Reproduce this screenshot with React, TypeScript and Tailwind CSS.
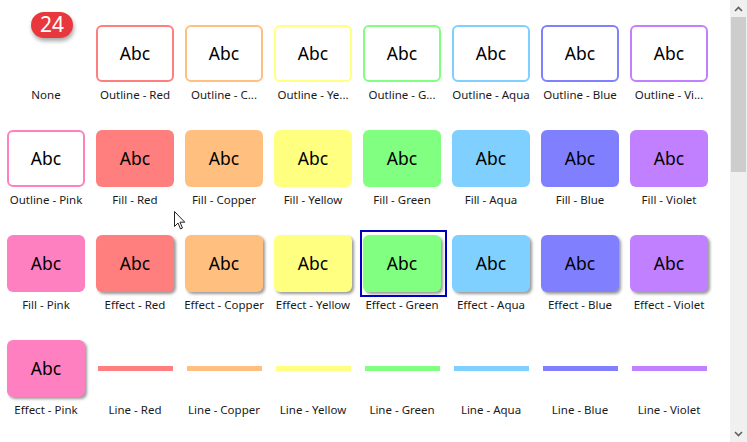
import React from "react";

type Item = {
  kind: "none" | "outline" | "fill" | "effect" | "line";
  color: string;
  label: string;
  selected?: boolean;
};

const C = {
  red: "#ff7f7f",
  copper: "#ffbf7f",
  yellow: "#ffff80",
  green: "#80ff80",
  aqua: "#80d0ff",
  blue: "#8080ff",
  violet: "#c080ff",
  pink: "#ff80c0",
};

const items: Item[] = [
  { kind: "none", color: "", label: "None" },
  { kind: "outline", color: C.red, label: "Outline - Red" },
  { kind: "outline", color: C.copper, label: "Outline - C..." },
  { kind: "outline", color: C.yellow, label: "Outline - Ye..." },
  { kind: "outline", color: C.green, label: "Outline - G..." },
  { kind: "outline", color: C.aqua, label: "Outline - Aqua" },
  { kind: "outline", color: C.blue, label: "Outline - Blue" },
  { kind: "outline", color: C.violet, label: "Outline - Vi..." },
  { kind: "outline", color: C.pink, label: "Outline - Pink" },
  { kind: "fill", color: C.red, label: "Fill - Red" },
  { kind: "fill", color: C.copper, label: "Fill - Copper" },
  { kind: "fill", color: C.yellow, label: "Fill - Yellow" },
  { kind: "fill", color: C.green, label: "Fill - Green" },
  { kind: "fill", color: C.aqua, label: "Fill - Aqua" },
  { kind: "fill", color: C.blue, label: "Fill - Blue" },
  { kind: "fill", color: C.violet, label: "Fill - Violet" },
  { kind: "fill", color: C.pink, label: "Fill - Pink" },
  { kind: "effect", color: C.red, label: "Effect - Red" },
  { kind: "effect", color: C.copper, label: "Effect - Copper" },
  { kind: "effect", color: C.yellow, label: "Effect - Yellow" },
  { kind: "effect", color: C.green, label: "Effect - Green", selected: true },
  { kind: "effect", color: C.aqua, label: "Effect - Aqua" },
  { kind: "effect", color: C.blue, label: "Effect - Blue" },
  { kind: "effect", color: C.violet, label: "Effect - Violet" },
  { kind: "effect", color: C.pink, label: "Effect - Pink" },
  { kind: "line", color: C.red, label: "Line - Red" },
  { kind: "line", color: C.copper, label: "Line - Copper" },
  { kind: "line", color: C.yellow, label: "Line - Yellow" },
  { kind: "line", color: C.green, label: "Line - Green" },
  { kind: "line", color: C.aqua, label: "Line - Aqua" },
  { kind: "line", color: C.blue, label: "Line - Blue" },
  { kind: "line", color: C.violet, label: "Line - Violet" },
];

function Tile({ item }: { item: Item }) {
  if (item.kind === "none") return <div className="h-[57px] w-[78px]" />;
  if (item.kind === "line")
    return (
      <div className="flex h-[57px] w-[78px] items-center justify-end pr-[1px]">
        <div className="h-[5px] w-[75px]" style={{ backgroundColor: item.color }} />
      </div>
    );
  const base =
    "flex h-[57px] w-[78px] items-center justify-center rounded-[6px] text-[17.5px] text-black";
  if (item.kind === "outline")
    return (
      <div className={base + " border-2 bg-white"} style={{ borderColor: item.color }}>
        Abc
      </div>
    );
  if (item.kind === "fill")
    return (
      <div className={base} style={{ backgroundColor: item.color }}>
        Abc
      </div>
    );
  return (
    <div
      className={base + " shadow-[2px_2px_3px_rgba(0,0,0,0.4)]"}
      style={{ backgroundColor: item.color }}
    >
      Abc
    </div>
  );
}

export default function App() {
  return (
    <div
      className="relative flex h-[442px] w-[747px] overflow-hidden bg-white"
      style={{ fontFamily: '"Noto Sans", "Open Sans", sans-serif' }}
    >
      <div className="relative w-[730px]">
        <div className="grid grid-cols-[repeat(8,78px)] gap-x-[11px] gap-y-[27px] pl-[7px] pt-[25px]">
          {items.map((it, i) => (
            <div key={i} className="relative flex flex-col items-center">
              {it.selected && (
                <div className="absolute left-[-3px] top-[-5px] h-[67px] w-[87px] border-2 border-[#0000c0]" />
              )}
              <Tile item={it} />
              <div className="mt-[5px] whitespace-nowrap text-[11.5px] leading-[16px] text-[#1a1a1a]">
                {it.label}
              </div>
            </div>
          ))}
        </div>

        {/* badge */}
        <div className="absolute left-[31px] top-[12px] flex h-[26px] w-[42px] items-center justify-center rounded-full bg-[#e8383d] pb-[1px] text-[21px] leading-none text-white shadow-[1px_3px_4px_rgba(0,0,0,0.35)]">
          24
        </div>

        {/* mouse cursor */}
        <svg
          className="absolute left-[174px] top-[211px]"
          width="13"
          height="20"
          viewBox="0 0 13 20"
        >
          <path
            d="M0.5 0.5 L0.5 15.5 L4 12 L6.5 18 L8.5 17 L6 11.2 L10.8 11.2 Z"
            fill="white"
            stroke="#222"
            strokeWidth="1"
            strokeLinejoin="miter"
          />
        </svg>
      </div>

      {/* scrollbar */}
      <div className="flex w-[17px] flex-col bg-[#f0f0f0]">
        <div className="flex h-[17px] items-center justify-center">
          <svg width="9" height="6" viewBox="0 0 9 6">
            <path d="M1 5 L4.5 1.5 L8 5" fill="none" stroke="#606060" strokeWidth="1.6" />
          </svg>
        </div>
        <div className="mx-[1px] h-[155px] bg-[#cdcdcd]" />
        <div className="flex-1" />
        <div className="flex h-[17px] items-center justify-center">
          <svg width="9" height="6" viewBox="0 0 9 6">
            <path d="M1 1 L4.5 4.5 L8 1" fill="none" stroke="#606060" strokeWidth="1.6" />
          </svg>
        </div>
      </div>
    </div>
  );
}
